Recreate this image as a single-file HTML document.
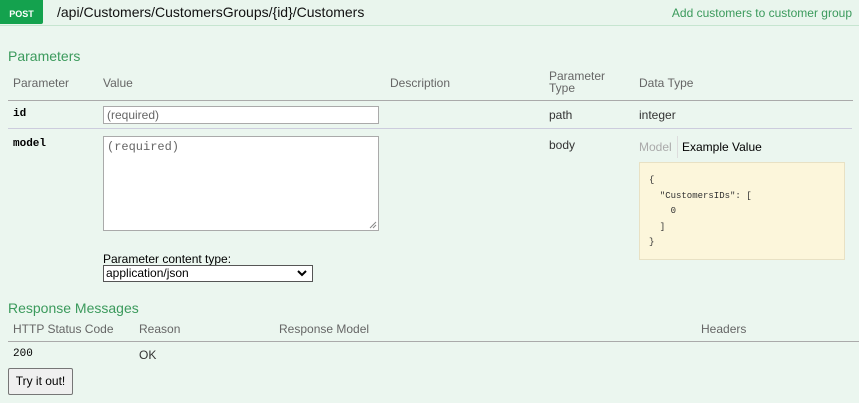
<!DOCTYPE html>
<html><head><style>
body{margin:0;width:859px;height:403px;background:#ebf6ef;font-family:"Liberation Sans",sans-serif;position:relative;overflow:hidden;color:#333}
.a{position:absolute;white-space:nowrap}
.h{font-size:12px;color:#666}
.t{font-size:12px;color:#333}
.mono{font-family:"Liberation Mono",monospace;font-size:11px;font-weight:bold;color:#000}
.line{position:absolute;left:8px;right:7px;height:1px;background:#ccc}
.g{color:#3b9a5c;font-size:14px}
</style></head><body>
<div class="a" style="left:0;top:0;width:859px;height:25px;background:#e9f5ed;border-bottom:1px solid #c6e5d0"></div>
<div class="a" style="left:0;top:0;width:43px;height:24px;background:#14a24e;border-radius:0 0 2px 0;color:#fff;font-size:9px;font-weight:bold;line-height:28px;text-align:center">POST</div>
<div class="a" style="left:57px;top:4px;font-size:14px;color:#111">/api/Customers/CustomersGroups/{id}/Customers</div>
<div class="a" style="right:7px;top:6px;font-size:12px;color:#3b9a5c">Add customers to customer group</div>

<div class="a g" style="left:8px;top:48px">Parameters</div>
<div class="a h" style="left:13px;top:76px">Parameter</div>
<div class="a h" style="left:103px;top:76px">Value</div>
<div class="a h" style="left:390px;top:76px">Description</div>
<div class="a h" style="left:549px;top:70px;line-height:12px">Parameter<br>Type</div>
<div class="a h" style="left:639px;top:76px">Data Type</div>
<div class="line" style="top:100px;background:#aaa;right:6px"></div>

<div class="a mono" style="left:13px;top:108px">id</div>
<div class="a" style="left:103px;top:106px;background:#fff;border:1px solid #aaa;font-size:12px;color:#666;line-height:16px;padding-left:3px;box-sizing:border-box;width:276px;height:18px">(required)</div>
<div class="a t" style="left:549px;top:108px">path</div>
<div class="a t" style="left:639px;top:108px">integer</div>
<div class="line" style="top:128px;background:#ccd"></div>

<div class="a mono" style="left:13px;top:138px">model</div>
<div class="a" style="left:103px;top:136px;width:276px;height:95px;box-sizing:border-box;background:#fff;border:1px solid #aaa;font-family:'Liberation Mono',monospace;font-size:12px;color:#666;padding:3px 3px">(required)
<svg style="position:absolute;right:1px;bottom:1px" width="8" height="8"><path d="M1 7L7 1M4 7L7 4" stroke="#888"/></svg></div>
<div class="a t" style="left:549px;top:138px">body</div>
<div class="a" style="left:639px;top:140px;font-size:12px;color:#aaa">Model</div>
<div class="a" style="left:677px;top:136px;width:1px;height:22px;background:#ddd"></div>
<div class="a" style="left:682px;top:140px;font-size:12px;color:#000">Example Value</div>
<div class="a" style="left:639px;top:162px;width:206px;height:98px;box-sizing:border-box;background:#fcf6db;border:1px solid #e8e1c4;font-family:'Liberation Mono',monospace;font-size:9px;color:#333;line-height:15.5px;padding:10px 9px;white-space:pre">{
  "CustomersIDs": [
    0
  ]
}</div>

<div class="a" style="left:103px;top:252px;font-size:12px;color:#000">Parameter content type:</div>
<div class="a" style="left:103px;top:265px;width:210px;height:17px;box-sizing:border-box;background:#fff;border:1px solid #555;font-size:12px;color:#000;line-height:15px;padding-left:2px">application/json
<svg style="position:absolute;right:5px;top:4px" width="10" height="7"><path d="M1 1L5 5L9 1" stroke="#000" stroke-width="2" fill="none"/></svg></div>

<div class="a g" style="left:8px;top:300px">Response Messages</div>
<div class="a h" style="left:13px;top:322px">HTTP Status Code</div>
<div class="a h" style="left:139px;top:322px">Reason</div>
<div class="a h" style="left:279px;top:322px">Response Model</div>
<div class="a h" style="left:701px;top:322px">Headers</div>
<div class="line" style="top:341px;background:#aaa;right:0"></div>
<div class="a" style="left:13px;top:348px;font-family:'Liberation Mono',monospace;font-size:11px;color:#000">200</div>
<div class="a t" style="left:139px;top:348px">OK</div>
<div class="a" style="left:8px;top:368px;width:65px;height:27px;box-sizing:border-box;background:#efefef;border:1px solid #767676;border-radius:2px;font-size:12px;color:#000;text-align:center;line-height:25px">Try it out!</div>
</body></html>
